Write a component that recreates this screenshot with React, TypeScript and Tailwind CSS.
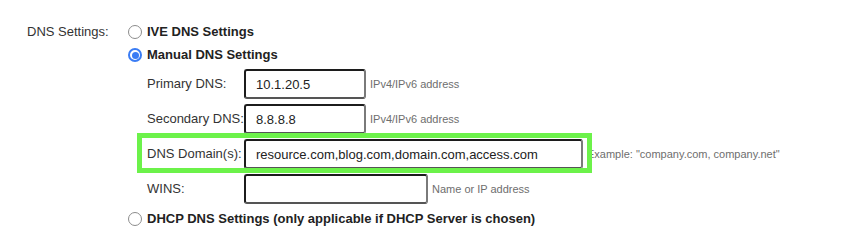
import React from "react";

function Radio({ checked = false }: { checked?: boolean }) {
  return checked ? (
    <span className="w-[14px] h-[14px] rounded-full border-2 border-[#3a7cf4] bg-white flex items-center justify-center shrink-0">
      <span className="w-[7px] h-[7px] rounded-full bg-[#3a7cf4]" />
    </span>
  ) : (
    <span className="w-[14px] h-[14px] rounded-full border border-[#8c8c8c] bg-white shrink-0" />
  );
}

interface FieldProps {
  label: string;
  value?: string;
  width: string;
  hint: string;
  highlight?: boolean;
}

function Field({ label, value = "", width, hint, highlight }: FieldProps) {
  return (
    <div className="relative flex items-center h-[30px]">
      <div className="w-[97px] shrink-0 text-[13px] text-[#333]">{label}</div>
      <input
        readOnly
        value={value}
        className={`${width} h-[30px] rounded-[3px] border-2 border-t-[#1c1c1c] border-l-[#1c1c1c] border-r-[#7a7a7a] border-b-[#555] bg-white pl-[10px] text-[13px] text-[#222] font-['Liberation_Sans',Arial,sans-serif] outline-none`}
      />
      <span className="ml-[4px] text-[11px] text-[#6e6e6e] whitespace-nowrap">{hint}</span>
      {highlight && (
        <div className="absolute -left-[10px] -top-[6px] w-[455px] h-[40px] border-[5px] border-[#6cf24a] pointer-events-none" />
      )}
    </div>
  );
}

export default function App() {
  return (
    <div className="w-[867px] h-[243px] bg-white overflow-hidden font-['Liberation_Sans',Arial,sans-serif] text-[13px] text-[#333] flex pt-[23px]">
      <div className="w-[128px] shrink-0 pl-[27px] h-[18px] flex items-center">DNS Settings:</div>
      <div className="flex flex-col">
        <label className="flex items-center gap-[5px] h-[18px]">
          <Radio />
          <span className="font-bold text-[#222]">IVE DNS Settings</span>
        </label>
        <label className="flex items-center gap-[5px] h-[18px] mt-[5px]">
          <Radio checked />
          <span className="font-bold text-[#222]">Manual DNS Settings</span>
        </label>
        <div className="flex flex-col gap-[5px] mt-[5px] pl-[19px]">
          <Field label="Primary DNS:" value="10.1.20.5" width="w-[122px]" hint="IPv4/IPv6 address" />
          <Field label="Secondary DNS:" value="8.8.8.8" width="w-[122px]" hint="IPv4/IPv6 address" />
          <Field
            label="DNS Domain(s):"
            value="resource.com,blog.com,domain.com,access.com"
            width="w-[339px]"
            hint={'Example: "company.com, company.net"'}
            highlight
          />
          <Field label="WINS:" width="w-[184px]" hint="Name or IP address" />
        </div>
        <label className="flex items-center gap-[5px] h-[18px] mt-[6px]">
          <Radio />
          <span className="font-bold text-[#222]">DHCP DNS Settings (only applicable if DHCP Server is chosen)</span>
        </label>
      </div>
    </div>
  );
}
